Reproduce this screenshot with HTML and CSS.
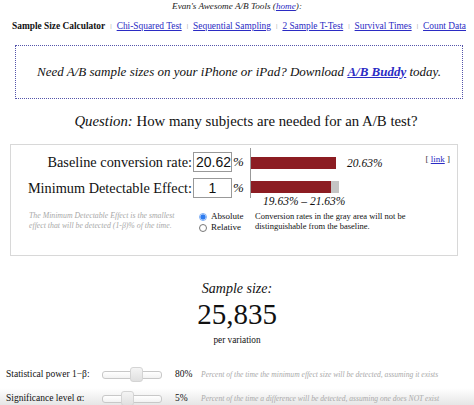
FILE: index.html
```html
<!DOCTYPE html>
<html>
<head>
<meta charset="utf-8">
<link rel="stylesheet" href="styles.css">
</head>
<body>
<div class="page">
  <div class="top">Evan's Awesome A/B Tools (<a href="#">home</a>):</div>
  <div class="nav"><b>Sample Size Calculator</b><span class="sep">|</span><a href="#">Chi-Squared Test</a><span class="sep">|</span><a href="#">Sequential Sampling</a><span class="sep">|</span><a href="#">2 Sample T-Test</a><span class="sep">|</span><a href="#">Survival Times</a><span class="sep">|</span><a href="#">Count Data</a></div>
  <div class="promo">Need A/B sample sizes on your iPhone or iPad? Download <a class="buddy" href="#">A/B Buddy</a> today.</div>
  <div class="question"><i>Question:</i> How many subjects are needed for an A/B test?</div>
  <div class="calc">
    <div class="lbl r1">Baseline conversion rate:</div>
    <div class="inp r1"><span class="box">20.62</span><span class="pct">%</span></div>
    <div class="chart">
      <div class="barrow"><div class="bar red" style="width:85px"></div><span class="val">20.63%</span></div>
      <div class="barrow"><div class="bar red" style="width:80px"></div><div class="bar gray" style="width:8px"></div></div>
    </div>
    <div class="link">[ <a href="#">link</a> ]</div>
    <div class="lbl r2">Minimum Detectable Effect:</div>
    <div class="inp r2"><span class="box center">1</span><span class="pct">%</span></div>
    <div class="range">19.63% – 21.63%</div>
    <div class="note1">The Minimum Detectable Effect is the smallest effect that will be detected (1-β)% of the time.</div>
    <div class="radios">
      <label class="radio"><span class="dot on"></span>Absolute</label>
      <label class="radio"><span class="dot"></span>Relative</label>
    </div>
    <div class="note2">Conversion rates in the gray area will not be distinguishable from the baseline.</div>
  </div>
  <div class="result">
    <div class="ss">Sample size:</div>
    <div class="num">25,835</div>
    <div class="per">per variation</div>
  </div>
  <div class="params">
    <div class="plabel">Statistical power 1−β:</div>
    <div class="slider"><span class="thumb" style="left:27px"></span></div>
    <div class="pval">80%</div>
    <div class="pdesc">Percent of the time the minimum effect size will be detected, assuming it exists</div>
    <div class="plabel">Significance level α:</div>
    <div class="slider"><span class="thumb" style="left:18px"></span></div>
    <div class="pval">5%</div>
    <div class="pdesc">Percent of the time a difference will be detected, assuming one does NOT exist</div>
  </div>
</div>
</body>
</html>
```
FILE: styles.css
```css
html, body {
  margin: 0;
  padding: 0;
}
body {
  font-family: "Liberation Serif", "Times New Roman", serif;
  color: #111;
  background: linear-gradient(to bottom, #fff 0, #fff 388px, #e6e6e6 405px);
  height: 405px;
  overflow: hidden;
}
a {
  color: #2b2bc4;
}
.page {
  width: 474px;
}
.top {
  font-style: italic;
  font-size: 9.2px;
  line-height: 12px;
  text-align: center;
  color: #222;
}
.nav {
  margin-top: 7px;
  font-size: 9.4px;
  line-height: 14px;
  padding-left: 12px;
  white-space: nowrap;
}
.nav b {
  color: #111;
}
.sep {
  color: #888;
  font-size: 7px;
  margin: 0 5px;
  position: relative;
  top: -1px;
}
.promo {
  margin: 11px 11px 0 15px;
  border: 1px dotted #5555aa;
  font-style: italic;
  font-size: 13px;
  line-height: 18px;
  padding: 17px 0;
  text-align: center;
}
.buddy {
  font-weight: bold;
}
.question {
  margin-top: 13px;
  font-size: 14.8px;
  line-height: 18px;
  text-align: center;
  padding-left: 18px;
}
.calc {
  margin: 14px 16px 0 10px;
  border: 1px solid #d8d8d8;
  display: grid;
  grid-template-columns: 182px 57px 1fr auto;
  padding: 3px 0 22px 0;
}
.lbl {
  grid-column: 1;
  text-align: right;
  font-size: 14.3px;
  line-height: 20px;
  padding-right: 1px;
  white-space: nowrap;
}
.lbl.r1, .inp.r1 {
  grid-row: 1;
  margin-top: 4px;
}
.lbl.r2, .inp.r2 {
  grid-row: 2;
  margin-top: 5px;
}
.inp {
  grid-column: 2;
  display: flex;
  align-items: center;
  height: 20px;
}
.box {
  box-sizing: border-box;
  width: 39px;
  height: 20px;
  border: 1px solid #999;
  font-family: "Liberation Sans", Arial, sans-serif;
  font-size: 14px;
  line-height: 18px;
  padding-left: 2px;
  text-align: left;
}
.box.center {
  text-align: center;
  padding-left: 0;
}
.pct {
  font-style: italic;
  font-size: 13px;
  margin-left: 1px;
}
.chart {
  grid-column: 3;
  grid-row: 1 / span 2;
  align-self: start;
  height: 50px;
  border-left: 1px solid #999;
  padding-top: 9px;
  box-sizing: border-box;
}
.barrow {
  display: flex;
  align-items: center;
  height: 12px;
  margin-bottom: 12px;
}
.bar {
  height: 12px;
}
.red {
  background: #8c1c22;
}
.gray {
  background: #c4c4c4;
}
.val {
  font-style: italic;
  font-size: 11.5px;
  margin-left: 11px;
}
.link {
  grid-column: 4;
  grid-row: 1;
  font-size: 9px;
  padding: 6px 7px 0 0;
  color: #333;
}
.range {
  grid-column: 3 / span 2;
  grid-row: 3;
  font-style: italic;
  font-size: 11.5px;
  line-height: 13px;
  padding-left: 13px;
  margin-top: -3px;
}
.note1 {
  grid-column: 1;
  grid-row: 4;
  font-style: italic;
  font-size: 7.8px;
  line-height: 10px;
  color: #a8a8a8;
  padding-left: 18px;
  margin-top: 3px;
}
.radios {
  grid-column: 2;
  grid-row: 4;
  padding-left: 4px;
  margin-top: 3px;
}
.radio {
  display: flex;
  align-items: center;
  font-size: 9px;
  line-height: 11px;
  white-space: nowrap;
}
.dot {
  box-sizing: border-box;
  width: 8px;
  height: 8px;
  border-radius: 50%;
  border: 1px solid #777;
  background: #fff;
  margin-right: 4px;
  margin-left: 2px;
}
.dot.on {
  border: 1px solid #7fb0f5;
  background: radial-gradient(circle, #2d7cf0 0, #2d7cf0 2.3px, #cfe0fb 2.8px);
}
.note2 {
  grid-column: 3 / span 2;
  grid-row: 4;
  font-size: 8.5px;
  line-height: 10px;
  padding-left: 5px;
  width: 160px;
  margin-top: 3px;
}
.result {
  text-align: center;
  margin-top: 25px;
}
.ss {
  font-style: italic;
  font-size: 14px;
  line-height: 16px;
}
.num {
  font-size: 29px;
  line-height: 32px;
  margin-top: 1px;
}
.per {
  font-size: 9.3px;
  line-height: 12px;
  margin-top: 4px;
}
.params {
  margin-top: 22px;
  display: grid;
  grid-template-columns: 96px 73px 26px 1fr;
  row-gap: 11px;
  align-items: center;
  padding-left: 6px;
}
.plabel {
  font-size: 9.5px;
  line-height: 13px;
  white-space: nowrap;
}
.slider {
  position: relative;
  width: 60px;
  height: 8px;
  box-sizing: border-box;
  border: 1px solid #c8c8c8;
  border-radius: 3px;
  background: linear-gradient(#fff, #f2f2f2);
}
.thumb {
  position: absolute;
  top: -5px;
  width: 13px;
  height: 15px;
  box-sizing: border-box;
  border: 1px solid #d4d4d4;
  border-radius: 3px;
  background: linear-gradient(#f4f4f4, #e0e0e0);
}
.pval {
  font-size: 9.5px;
  line-height: 13px;
}
.pdesc {
  font-style: italic;
  font-size: 7.6px;
  line-height: 13px;
  color: #aaa;
  white-space: nowrap;
}
```
